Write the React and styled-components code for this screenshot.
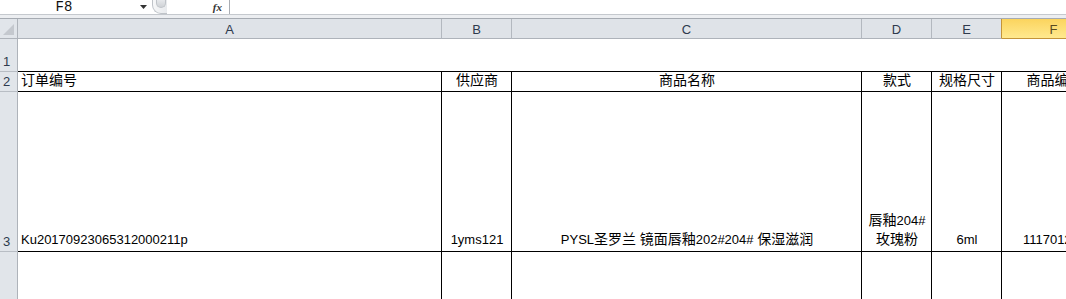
import React from "react";
import styled, { createGlobalStyle } from "styled-components";

const Global = createGlobalStyle`
  html, body { margin: 0; padding: 0; background: #fff; }
  body { font-family: "Liberation Sans", "Noto Sans CJK SC", sans-serif; overflow: hidden; }
`;

const Page = styled.div`
  width: 1066px;
  height: 299px;
  overflow: hidden;
  background: #fff;
`;

const FormulaBar = styled.div`
  display: flex;
  align-items: stretch;
  height: 14px;
  border-bottom: 1px solid #c5c9ce;
  background: #fff;
`;

const NameBox = styled.div`
  width: 136px;
  display: flex;
  align-items: center;
  justify-content: center;
  font-family: "Liberation Mono", monospace;
  font-size: 14px;
  color: #111;
  padding-right: 8px;
  box-sizing: border-box;
  line-height: 14px;
`;

const Arrow = styled.div`
  width: 14px;
  display: flex;
  align-items: center;
  justify-content: center;
`;

const Splitter = styled.div`
  width: 15px;
  margin-left: 2px;
  position: relative;
  border: 1px solid #bfc3c8;
  border-top: none;
  border-right: none;
  border-radius: 0 0 0 9px;
  box-sizing: border-box;
  background: linear-gradient(90deg, #f6f7f8, #e8eaed);
  &::after {
    content: "";
    position: absolute;
    left: 3px;
    top: 0;
    width: 8px;
    height: 7px;
    border-radius: 0 0 5px 5px;
    background: linear-gradient(#e6e8eb, #cfd2d6);
    border: 1px solid #bfc3c8;
    border-top: none;
  }
`;

const Fx = styled.div`
  width: 63px;
  display: flex;
  align-items: center;
  justify-content: flex-end;
  padding-right: 7px;
  box-sizing: border-box;
  font-family: "Liberation Serif", serif;
  font-style: italic;
  font-weight: bold;
  font-size: 11px;
  color: #333;
  border-right: 1px solid #a9adb3;
`;

const FormulaInput = styled.div`
  flex: 1;
`;

const Strip = styled.div`
  height: 3px;
  background: #eceef1;
  border-bottom: 1px solid #a6abb2;
`;

const Sheet = styled.div`
  display: grid;
  grid-template-columns: 18px 424px 70px 350px 70px 70px 104px;
  grid-template-rows: 20px 33px 20px 160px 60px;
  width: max-content;
`;

const Corner = styled.div`
  background: #e1e5ea;
  border-right: 1px solid #aeb3ba;
  border-bottom: 1px solid #aeb3ba;
  position: relative;
  &::after {
    content: "";
    position: absolute;
    right: 3px;
    bottom: 3px;
    width: 0;
    height: 0;
    border-left: 11px solid transparent;
    border-bottom: 11px solid #c4c8ce;
  }
`;

const ColHead = styled.div`
  background: ${(p) =>
    p.$selected ? "linear-gradient(#fbd45e, #ffe98f)" : "#dfe3e8"};
  border-right: 1px solid ${(p) => (p.$beforeSel ? "#c49439" : "#b3b8bf")};
  border-bottom: 1px solid ${(p) => (p.$selected ? "#c49439" : "#aeb3ba")};
  display: flex;
  align-items: center;
  justify-content: center;
  font-family: "Liberation Sans", sans-serif;
  font-size: 13px;
  color: ${(p) => (p.$selected ? "#5a4a20" : "#2e3a4d")};
  padding-top: 1px;
  box-sizing: border-box;
  overflow: hidden;
`;

const RowHead = styled.div`
  background: #e1e5ea;
  border-right: 1px solid #aeb3ba;
  border-bottom: 1px solid ${(p) => (p.$last ? "transparent" : "#b8bdc4")};
  display: flex;
  align-items: flex-end;
  padding: 0 0 1px 3px;
  box-sizing: border-box;
  font-family: "Liberation Sans", sans-serif;
  font-size: 13px;
  line-height: 16px;
  color: #2e3a4d;
`;

const Cell = styled.div`
  box-sizing: border-box;
  display: flex;
  flex-direction: column;
  align-items: ${(p) => (p.$align === "left" ? "flex-start" : "center")};
  justify-content: flex-end;
  text-align: ${(p) => (p.$align === "left" ? "left" : "center")};
  padding: 0 2px 2px 3px;
  overflow: hidden;
  white-space: nowrap;
  font-size: 14px;
  line-height: 18px;
  color: #000;
  border-right: ${(p) => (p.$right ? "1px solid #000" : "none")};
  border-bottom: ${(p) => (p.$bottom ? "1px solid #000" : "none")};
`;

const Lat = styled.span`
  font-family: "Liberation Sans", sans-serif;
  font-size: 13px;
`;

const Line = styled.div`
  line-height: 19px;
`;

const cols = ["A", "B", "C", "D", "E", "F"];

const headers = [
  { t: "订单编号", align: "left" },
  { t: "供应商" },
  { t: "商品名称" },
  { t: "款式" },
  { t: "规格尺寸" },
  { t: "商品编码" },
];

export default function App() {
  return (
    <Page>
      <Global />
      <FormulaBar>
        <NameBox>F8</NameBox>
        <Arrow>
          <svg width="7" height="4" viewBox="0 0 7 4">
            <path d="M0 0 H7 L3.5 4 Z" fill="#333" />
          </svg>
        </Arrow>
        <Splitter />
        <Fx>fx</Fx>
        <FormulaInput />
      </FormulaBar>
      <Strip />
      <Sheet>
        <Corner />
        {cols.map((c) => (
          <ColHead key={c} $selected={c === "F"} $beforeSel={c === "E"}>
            {c}
          </ColHead>
        ))}

        <RowHead>1</RowHead>
        {cols.map((c) => (
          <Cell key={"r1" + c} $bottom />
        ))}

        <RowHead>2</RowHead>
        {headers.map((h, i) => (
          <Cell key={"r2" + i} $align={h.align} $right={i < 5} $bottom>
            <span>{h.t}</span>
          </Cell>
        ))}

        <RowHead>3</RowHead>
        <Cell $align="left" $right $bottom>
          <Lat>Ku20170923065312000211p</Lat>
        </Cell>
        <Cell $right $bottom>
          <Lat>1yms121</Lat>
        </Cell>
        <Cell $right $bottom>
          <span>
            <Lat>PYSL</Lat>圣罗兰<Lat> </Lat>镜面唇釉<Lat>202#204# </Lat>保湿滋润
          </span>
        </Cell>
        <Cell $right $bottom>
          <Line>
            唇釉<Lat>204#</Lat>
          </Line>
          <Line>玫瑰粉</Line>
        </Cell>
        <Cell $right $bottom>
          <Lat>6ml</Lat>
        </Cell>
        <Cell $bottom>
          <Lat>111701234</Lat>
        </Cell>

        <RowHead $last />
        {cols.map((c, i) => (
          <Cell key={"r4" + c} $right={i < 5} />
        ))}
      </Sheet>
    </Page>
  );
}
